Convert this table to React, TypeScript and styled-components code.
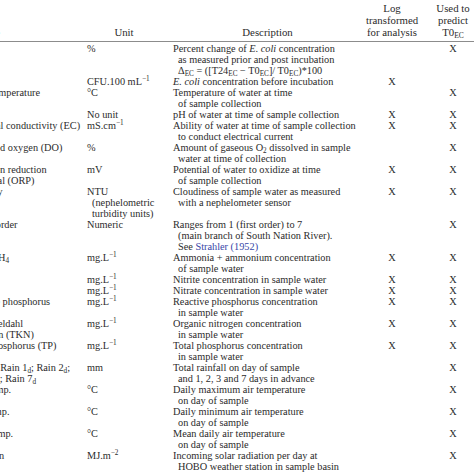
import React from "react";
import styled, { createGlobalStyle } from "styled-components";

const GlobalStyle = createGlobalStyle`
	html, body {
		margin: 0;
		padding: 0;
		background: #ffffff;
		overflow: hidden;
	}
	body {
		font-family: "Liberation Serif", "Times New Roman", serif;
		color: #2b2b2b;
	}
`;

const COLUMNS = "123px 86px 189px 60px 62px";

const Page = styled.div`
	width: 474px;
	height: 474px;
	overflow: hidden;
`;

const Table = styled.div`
	margin-left: -36px;
	width: 520px;
`;

const HeaderRow = styled.div`
	display: grid;
	grid-template-columns: ${COLUMNS};
	align-items: end;
	padding-top: 2px;
	padding-bottom: 3px;
	border-bottom: 1.5px solid #8c8c8c;
	font-size: 10.8px;
	line-height: 12px;
`;

const HeaderCell = styled.div<{ $shift?: number; $left?: boolean }>`
	text-align: ${(p) => (p.$left ? "left" : "center")};
	padding-right: ${(p) => (p.$shift ? `${p.$shift}px` : "0")};
`;

const Body = styled.div`
	padding-top: 1px;
	font-size: 10.3px;
	line-height: 11px;
`;

const Row = styled.div`
	display: grid;
	grid-template-columns: ${COLUMNS};
	align-items: start;
`;

const TextCell = styled.div``;

const Line = styled.div<{ $indent?: boolean }>`
	white-space: nowrap;
	padding-left: ${(p) => (p.$indent ? "5px" : "0")};
`;

const MarkCell = styled.div`
	text-align: center;
`;

const Sub = styled.sub`
	font-size: 70%;
	vertical-align: -0.25em;
	line-height: 0;
`;

const Sup = styled.sup`
	font-size: 70%;
	vertical-align: 0.5em;
	line-height: 0;
`;

const Ref = styled.span`
	color: #3646a8;
`;

type RowData = {
	variable: React.ReactNode[];
	unit: React.ReactNode[];
	description: React.ReactNode[];
	log?: boolean;
	used?: boolean;
};

const perL = (
	<>
		mg.L<Sup>−1</Sup>
	</>
);

const rows: RowData[] = [
	{
		variable: [
			<>
				Δ<Sub>EC</Sub>
			</>,
		],
		unit: ["%"],
		description: [
			<>
				Percent change of <i>E. coli</i> concentration
			</>,
			"as measured prior and post incubation",
			<>
				Δ<Sub>EC</Sub> = ([T24<Sub>EC</Sub> − T0<Sub>EC</Sub>]/ T0<Sub>EC</Sub>)*100
			</>,
		],
		used: true,
	},
	{
		variable: [
			<>
				T0<Sub>EC</Sub>
			</>,
		],
		unit: [
			<>
				CFU.100 mL<Sup>−1</Sup>
			</>,
		],
		description: [
			<>
				<i>E. coli</i> concentration before incubation
			</>,
		],
		log: true,
	},
	{
		variable: ["Water temperature"],
		unit: ["°C"],
		description: ["Temperature of water at time", "of sample collection"],
		used: true,
	},
	{
		variable: ["pH"],
		unit: ["No unit"],
		description: ["pH of water at time of sample collection"],
		log: true,
		used: true,
	},
	{
		variable: ["Electrical conductivity (EC)"],
		unit: [
			<>
				mS.cm<Sup>−1</Sup>
			</>,
		],
		description: [
			"Ability of water at time of sample collection",
			"to conduct electrical current",
		],
		log: true,
		used: true,
	},
	{
		variable: ["Dissolved oxygen (DO)"],
		unit: ["%"],
		description: [
			<>
				Amount of gaseous O<Sub>2</Sub> dissolved in sample
			</>,
			"water at time of collection",
		],
		used: true,
	},
	{
		variable: ["Oxidation reduction", "potential (ORP)"],
		unit: ["mV"],
		description: ["Potential of water to oxidize at time", "of sample collection"],
		log: true,
		used: true,
	},
	{
		variable: ["Turbidity"],
		unit: ["NTU", "(nephelometric", "turbidity units)"],
		description: ["Cloudiness of sample water as measured", "with a nephelometer sensor"],
		log: true,
		used: true,
	},
	{
		variable: ["Stream order"],
		unit: ["Numeric"],
		description: [
			"Ranges from 1 (first order) to 7",
			"(main branch of South Nation River).",
			<>
				See <Ref>Strahler (1952)</Ref>
			</>,
		],
		used: true,
	},
	{
		variable: [
			<>
				NH<Sub>3</Sub> / NH<Sub>4</Sub>
			</>,
		],
		unit: [perL],
		description: ["Ammonia + ammonium concentration", "of sample water"],
		log: true,
		used: true,
	},
	{
		variable: [
			<>
				NO<Sub>2</Sub>
			</>,
		],
		unit: [perL],
		description: ["Nitrite concentration in sample water"],
		log: true,
		used: true,
	},
	{
		variable: [
			<>
				NO<Sub>3</Sub>
			</>,
		],
		unit: [perL],
		description: ["Nitrate concentration in sample water"],
		log: true,
		used: true,
	},
	{
		variable: ["Reactive phosphorus"],
		unit: [perL],
		description: ["Reactive phosphorus concentration", "in sample water"],
		log: true,
		used: true,
	},
	{
		variable: ["Total Kjeldahl", "nitrogen (TKN)"],
		unit: [perL],
		description: ["Organic nitrogen concentration", "in sample water"],
		log: true,
		used: true,
	},
	{
		variable: ["Total phosphorus (TP)"],
		unit: [perL],
		description: ["Total phosphorus concentration", "in sample water"],
		log: true,
		used: true,
	},
	{
		variable: [
			<>
				Rain 0<Sub>d</Sub>; Rain 1<Sub>d</Sub>; Rain 2<Sub>d</Sub>;
			</>,
			<>
				Rain 3<Sub>d</Sub>; Rain 7<Sub>d</Sub>
			</>,
		],
		unit: ["mm"],
		description: ["Total rainfall on day of sample", "and 1, 2, 3 and 7 days in advance"],
		used: true,
	},
	{
		variable: ["Max. temp."],
		unit: ["°C"],
		description: ["Daily maximum air temperature", "on day of sample"],
		used: true,
	},
	{
		variable: ["Min. temp."],
		unit: ["°C"],
		description: ["Daily minimum air temperature", "on day of sample"],
		used: true,
	},
	{
		variable: ["Mean temp."],
		unit: ["°C"],
		description: ["Mean daily air temperature", "on day of sample"],
		used: true,
	},
	{
		variable: ["Radiation"],
		unit: [
			<>
				MJ.m<Sup>−2</Sup>
			</>,
		],
		description: [
			"Incoming solar radiation per day at",
			"HOBO weather station in sample basin",
		],
		used: true,
	},
];

const Lines = ({ items }: { items: React.ReactNode[] }) => (
	<TextCell>
		{items.map((item, i) => (
			<Line key={i} $indent={i > 0}>
				{item}
			</Line>
		))}
	</TextCell>
);

export default function App() {
	return (
		<Page>
			<GlobalStyle />
			<Table>
				<HeaderRow>
					<HeaderCell $left>Variable</HeaderCell>
					<HeaderCell $shift={12}>Unit</HeaderCell>
					<HeaderCell>Description</HeaderCell>
					<HeaderCell>
						Log
						<br />
						transformed
						<br />
						for analysis
					</HeaderCell>
					<HeaderCell>
						Used to
						<br />
						predict
						<br />
						T0<Sub>EC</Sub>
					</HeaderCell>
				</HeaderRow>
				<Body>
					{rows.map((row, i) => (
						<Row key={i}>
							<Lines items={row.variable} />
							<Lines items={row.unit} />
							<Lines items={row.description} />
							<MarkCell>{row.log ? "X" : ""}</MarkCell>
							<MarkCell>{row.used ? "X" : ""}</MarkCell>
						</Row>
					))}
				</Body>
			</Table>
		</Page>
	);
}
